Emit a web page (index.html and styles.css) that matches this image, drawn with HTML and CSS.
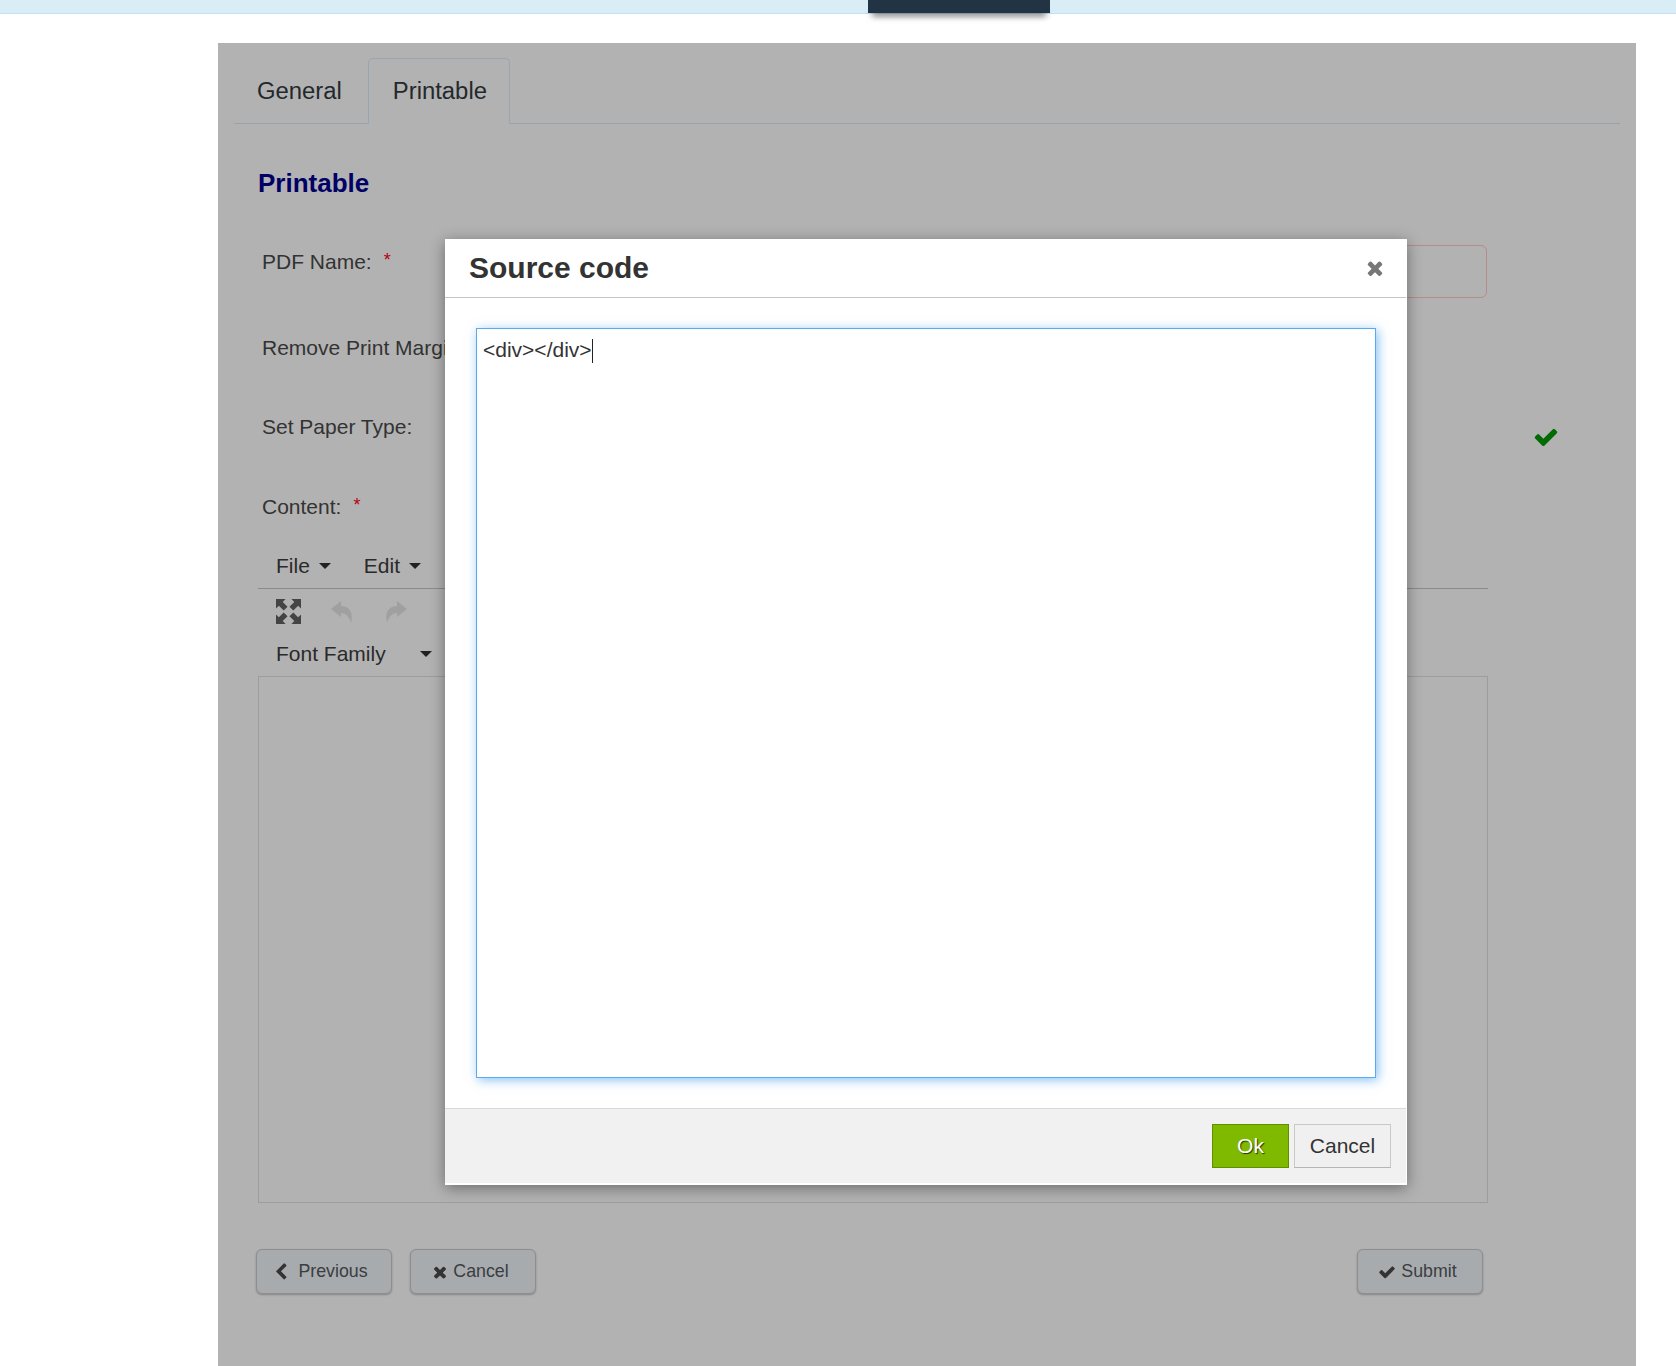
FILE: index.html
```html
<!DOCTYPE html>
<html lang="en">
<head>
<meta charset="utf-8">
<title>Source code</title>
<link rel="stylesheet" href="styles.css">
</head>
<body>
<header class="topbar"><div class="topbar-tab"></div></header>
<main class="panel">
  <nav class="tabs">
    <a class="tab">General</a>
    <a class="tab tab-active">Printable</a>
  </nav>
  <div class="content">
    <h2 class="heading">Printable</h2>
    <div class="row row-pdf">
      <label class="label">PDF Name:<span class="req">*</span></label>
      <div class="text-input"></div>
    </div>
    <div class="row row-remove"><label class="label">Remove Print Margin:</label></div>
    <div class="row row-paper">
      <label class="label">Set Paper Type:</label>
      <svg class="valid-check" viewBox="0 0 1792 1792"><path d="M1671 566q0 40-28 68l-724 724-136 136q-28 28-68 28t-68-28l-136-136-362-362q-28-28-28-68t28-68l136-136q28-28 68-28t68 28l294 295 656-657q28-28 68-28t68 28l136 136q28 28 28 68z"/></svg>
    </div>
    <div class="row row-content"><label class="label">Content:<span class="req">*</span></label></div>
    <div class="editor">
      <div class="menubar">
        <span class="menu">File<i class="caret"></i></span>
        <span class="menu">Edit<i class="caret"></i></span>
      </div>
      <div class="toolbar">
        <svg class="tool tool-full" viewBox="0 0 26 26">
          <path d="M0 0H10L7 3L12 8L8 12L3 7L0 10Z"/>
          <path d="M26 0H16L19 3L14 8L18 12L23 7L26 10Z"/>
          <path d="M0 26H10L7 23L12 18L8 14L3 19L0 16Z"/>
          <path d="M26 26H16L19 23L14 18L18 14L23 19L26 16Z"/>
        </svg>
        <svg class="tool tool-off" viewBox="0 0 24 24"><path d="M1 9L11 1V6C18 6 24 11 21 23C19 16 15 13 11 13V17Z"/></svg>
        <svg class="tool tool-off tool-redo" viewBox="0 0 24 24"><path d="M23 9L13 1V6C6 6 0 11 3 23C5 16 9 13 13 13V17Z"/></svg>
      </div>
      <div class="fontbar"><span class="font-select">Font Family<i class="caret"></i></span></div>
      <div class="edit-area"></div>
    </div>
    <div class="actions">
      <button class="btn btn-prev"><svg class="btn-icon" viewBox="0 0 1792 1792"><path d="M1427 301l-531 531 531 531q19 19 19 45t-19 45l-166 166q-19 19-45 19t-45-19l-742-742q-19-19-19-45t19-45l742-742q19-19 45-19t45 19l166 166q19 19 19 45t-19 45z"/></svg>Previous</button>
      <button class="btn btn-cancel"><svg class="btn-icon" viewBox="0 0 1792 1792"><path d="M1490 1322q0 40-28 68l-136 136q-28 28-68 28t-68-28l-294-294-294 294q-28 28-68 28t-68-28l-136-136q-28-28-28-68t28-68l294-294-294-294q-28-28-28-68t28-68l136-136q28-28 68-28t68 28l294 294 294-294q28-28 68-28t68 28l136 136q28 28 28 68t-28 68l-294 294 294 294q28 28 28 68z"/></svg>Cancel</button>
      <span class="spacer"></span>
      <button class="btn btn-submit"><svg class="btn-icon" viewBox="0 0 1792 1792"><path d="M1671 566q0 40-28 68l-724 724-136 136q-28 28-68 28t-68-28l-136-136-362-362q-28-28-28-68t28-68l136-136q28-28 68-28t68 28l294 295 656-657q28-28 68-28t68 28l136 136q28 28 28 68z"/></svg>Submit</button>
    </div>
  </div>
</main>
<section class="modal">
  <div class="modal-head">
    <h3 class="modal-title">Source code</h3>
    <svg class="modal-close" viewBox="0 0 1792 1792"><path d="M1490 1322q0 40-28 68l-136 136q-28 28-68 28t-68-28l-294-294-294 294q-28 28-68 28t-68-28l-136-136q-28-28-28-68t28-68l294-294-294-294q-28-28-28-68t28-68l136-136q28-28 68-28t68 28l294 294 294-294q28-28 68-28t68 28l136 136q28 28 28 68t-28 68l-294 294 294 294q28 28 28 68z"/></svg>
  </div>
  <div class="modal-body">
    <div class="source">&lt;div&gt;&lt;/div&gt;<span class="text-caret"></span></div>
  </div>
  <div class="modal-foot">
    <button class="mbtn mbtn-ok">Ok</button>
    <button class="mbtn mbtn-cancel">Cancel</button>
  </div>
</section>
</body>
</html>
```
FILE: styles.css
```css
* { box-sizing: border-box; }
html, body { margin: 0; padding: 0; height: 1366px; overflow: hidden; background: #fff; }
body { font-family: "Liberation Sans", Arial, sans-serif; color: #333; position: relative; }

.topbar { height: 14px; background: #d9edf7; border-bottom: 1px solid #c3dff3; display: flex; padding-left: 868px; }
.topbar-tab { width: 182px; height: 13px; background: #223344; box-shadow: 0 7px 6px -4px rgba(0,0,0,.6); }

.panel { width: 1418px; height: 1323px; margin: 29px 0 0 218px; padding: 15px 16px 0; background: #b2b2b2; }

.tabs { display: flex; height: 66px; border-bottom: 1px solid #9aa3a9; }
.tab { display: block; height: 66px; font-size: 23.85px; line-height: 66px; color: #24282c; padding: 0 24px 0 23px; margin-right: 2px; }
.tab-active { padding: 0 22px 0 24px; border: 1px solid #97a6b0; border-bottom: 1px solid #b2b2b2; border-radius: 5px 5px 0 0; line-height: 64px; }

.content { width: 1254px; padding-left: 24px; }
.heading { margin: 44px 0 0; height: 46px; font-size: 26px; line-height: 31px; font-weight: 700; color: #000066; }

.row { display: flex; justify-content: space-between; align-items: flex-start; }
.row-pdf { height: 88px; margin-top: 31px; width: 1229px; }
.row-remove { height: 79px; }
.row-paper { height: 80px; width: 1301px; }
.row-content { height: 52px; }
.label { display: block; font-size: 21px; line-height: 30px; color: #333; padding-left: 4px; white-space: nowrap; }
.row-pdf .label { margin-top: 2px; }
.req { color: #b8000f; margin-left: 12px; position: relative; top: -3px; font-size: 18px; }
.text-input { width: 900px; height: 53px; border: 1px solid #b58c8c; border-radius: 6px; }
.valid-check { width: 26px; height: 26px; fill: #006b00; margin-top: 12px; }

.editor { width: 1230px; }
.menubar { height: 45px; border-bottom: 1px solid #8b8b8b; display: flex; padding-left: 18px; gap: 33px; }
.menu { font-size: 21px; line-height: 44px; color: #2a2a2a; display: flex; align-items: center; }
.caret { display: block; width: 0; height: 0; border-top: 6px solid #222; border-left: 6px solid transparent; border-right: 6px solid transparent; margin-left: 9px; }
.toolbar { height: 45px; display: flex; align-items: center; padding-left: 18px; gap: 29px; }
.tool { width: 25px; height: 25px; }
.tool-full { fill: #444; }
.tool-off { width: 24px; height: 24px; fill: #a0a0a0; }
.tool-redo { margin-left: 1px; }
.fontbar { height: 42px; padding-left: 18px; }
.font-select { font-size: 21px; line-height: 40px; color: #2a2a2a; display: flex; align-items: center; width: 156px; justify-content: space-between; }
.edit-area { height: 527px; border: 1px solid #9d9d9d; }

.actions { display: flex; gap: 18px; margin: 46px 0 0 -2px; width: 1227px; }
.spacer { flex: 1; }
.btn { height: 45px; background: #a8abae; border: 1px solid #8e8e8e; border-radius: 6px; box-shadow: 0 1px 2px rgba(0,0,0,.25); font-family: inherit; font-size: 17.8px; color: #3a3d41; display: flex; align-items: center; justify-content: center; padding: 0; }
.btn-prev { width: 136px; gap: 8px; padding-right: 2px; }
.btn-cancel { width: 126px; gap: 4px; padding-right: 6px; }
.btn-submit { width: 126px; gap: 5px; padding-right: 5px; }
.btn-icon { width: 18px; height: 18px; fill: #333; }
.btn-prev .btn-icon { margin-left: -6px; }

.modal { position: absolute; left: 445px; top: 239px; width: 962px; height: 946px; background: #fff; box-shadow: 0 3px 14px rgba(0,0,0,.4); display: flex; flex-direction: column; }
.modal-head { height: 59px; border-bottom: 1px solid #c5c5c5; display: flex; align-items: center; justify-content: space-between; padding: 0 20px 0 24px; margin-right: 1px; }
.modal-title { margin: 0; font-size: 30px; line-height: 36px; font-weight: 700; color: #333; }
.modal-close { width: 22px; height: 22px; fill: #777; }
.modal-body { flex: 1; padding: 30px 30px 0 31px; }
.source { width: 900px; height: 750px; border: 1px solid #59aaf0; box-shadow: 2px 2px 10px rgba(82,168,236,.7); padding: 7px 6px; font-size: 21px; line-height: 28px; color: #333; background: #fff; }
.text-caret { display: inline-block; width: 1px; height: 24px; background: #222; vertical-align: -6px; }
.modal-foot { height: 75px; margin: 0 1px 2px 0; background: #f1f1f1; border-top: 1px solid #d9d9d9; display: flex; justify-content: flex-end; align-items: flex-start; gap: 5px; padding: 15px 15px 0 0; }
.mbtn { height: 44px; font-family: inherit; font-size: 21px; padding: 0; }
.mbtn-ok { width: 77px; background: #7fb900; border: 1px solid #5f8f00; color: #fff; text-shadow: 1px 1px 1px rgba(0,0,0,.7); }
.mbtn-cancel { width: 97px; background: #f0f0f0; border: 1px solid #c9c9c9; border-bottom-color: #b5b5b5; color: #333; }
```
